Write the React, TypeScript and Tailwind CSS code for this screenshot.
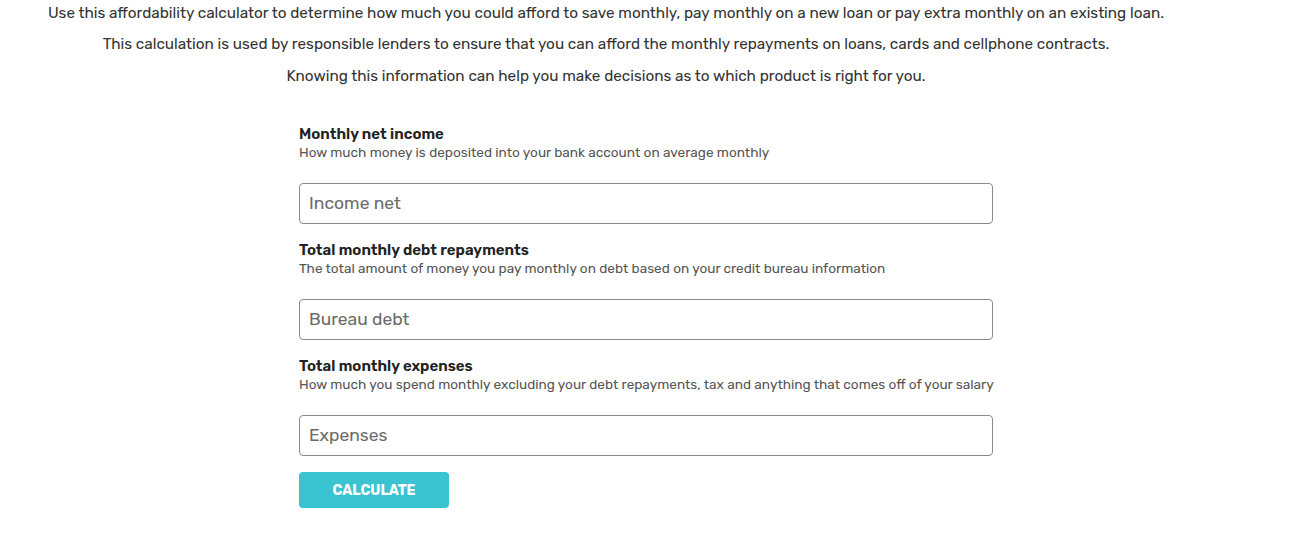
const font = { fontFamily: "Rubik, 'Open Sans', 'Liberation Sans', sans-serif" };

const fields = [
  {
    label: "Monthly net income",
    hint: "How much money is deposited into your bank account on average monthly",
    placeholder: "Income net",
  },
  {
    label: "Total monthly debt repayments",
    hint: "The total amount of money you pay monthly on debt based on your credit bureau information",
    placeholder: "Bureau debt",
  },
  {
    label: "Total monthly expenses",
    hint: "How much you spend monthly excluding your debt repayments, tax and anything that comes off of your salary",
    placeholder: "Expenses",
  },
];

export default function App() {
  return (
    <div className="min-h-screen bg-white text-[#333]" style={font}>
      <div className="w-[1212px] pt-[3px] text-center text-[15.3px] leading-[20px]">
        <p className="mb-[11px]">
          Use this affordability calculator to determine how much you could afford to save monthly, pay monthly on a
          new loan or pay extra monthly on an existing loan.
        </p>
        <p className="mb-3">
          This calculation is used by responsible lenders to ensure that you can afford the monthly repayments on
          loans, cards and cellphone contracts.
        </p>
        <p>Knowing this information can help you make decisions as to which product is right for you.</p>
      </div>

      <form className="ml-[299px] mt-[38px] flex w-[694px] flex-col" onSubmit={(e) => e.preventDefault()}>
        {fields.map((f, i) => (
          <div key={f.label} className={i > 0 ? "mt-4" : ""}>
            <label className="block text-[15px] font-semibold leading-[20px] text-[#222]">{f.label}</label>
            <p className="whitespace-nowrap text-[13.6px] leading-[17px] text-[#555]">{f.hint}</p>
            <input
              type="text"
              placeholder={f.placeholder}
              className="mt-[22px] h-[41px] w-full rounded border border-[#8a8a8a] px-[9px] pb-[2px] text-[17.5px] text-[#333] placeholder:text-[#6b6b6b] outline-none"
            />
          </div>
        ))}
        <button
          type="submit"
          className="mt-4 h-[36px] w-[150px] rounded bg-[#3ac3d0] text-[14px] font-bold uppercase text-white"
        >
          Calculate
        </button>
      </form>
    </div>
  );
}
